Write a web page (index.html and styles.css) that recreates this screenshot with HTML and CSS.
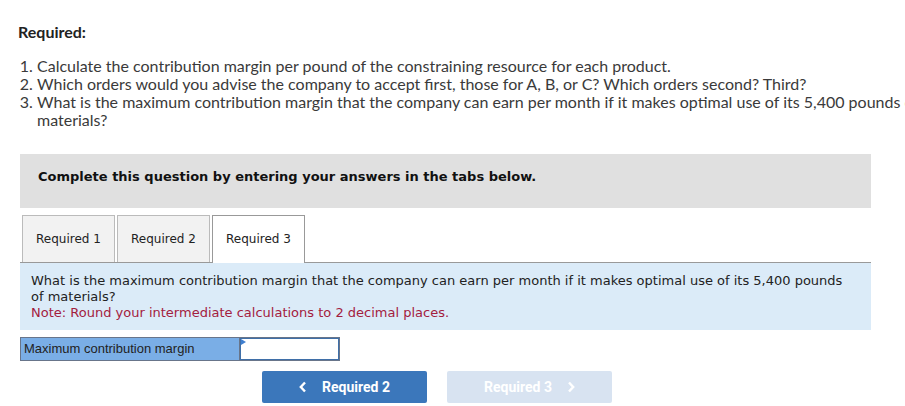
FILE: index.html
```html
<!DOCTYPE html>
<html lang="en">
<head>
    <meta charset="UTF-8">
    <meta name="viewport" content="width=device-width, initial-scale=1.0">
    <title>Required</title>
    <link rel="stylesheet" href="styles.css">
</head>
<body>
    <div class="page">
        <h2 class="required-title">Required:</h2>
        <ol class="required-list">
            <li>Calculate the contribution margin per pound of the constraining resource for each product.</li>
            <li>Which orders would you advise the company to accept first, those for A, B, or C? Which orders second? Third?</li>
            <li>What is the maximum contribution margin that the company can earn per month if it makes optimal use of its 5,400 pounds of materials?</li>
        </ol>

        <div class="instructions">
            Complete this question by entering your answers in the tabs below.
        </div>

        <div class="tabs">
            <button class="tab">Required 1</button>
            <button class="tab">Required 2</button>
            <button class="tab active">Required 3</button>
        </div>

        <div class="question">
            What is the maximum contribution margin that the company can earn per month if it makes optimal use of its 5,400 pounds of materials?
            <div class="note">Note: Round your intermediate calculations to 2 decimal places.</div>
        </div>

        <div class="answer-row">
            <div class="answer-label">Maximum contribution margin</div>
            <div class="answer-cell">
                <span class="flag"></span>
                <input type="text" class="answer-input">
            </div>
        </div>

        <div class="nav">
            <button class="nav-button prev">
                <svg class="chev" width="8" height="12" viewBox="0 0 8 12"><polyline points="6,1.5 1.8,6 6,10.5" fill="none" stroke="#fff" stroke-width="2.4"/></svg>
                Required 2
            </button>
            <button class="nav-button next disabled">
                Required 3
                <svg class="chev" width="8" height="12" viewBox="0 0 8 12"><polyline points="2,1.5 6.2,6 2,10.5" fill="none" stroke="#fff" stroke-width="2.4"/></svg>
            </button>
        </div>
    </div>
</body>
</html>
```

FILE: styles.css
```css
html, body {
    margin: 0;
    padding: 0;
    overflow: hidden;
    background: #fff;
}
.page {
    width: 851px;
    padding: 20px 0 0 20px;
    color: #333;
}
.required-title {
    font-family: Lato, "Liberation Sans", sans-serif;
    font-size: 16px;
    font-weight: bold;
    color: #222;
    margin: 2px 0 0 -2px;
}
.required-list {
    font-family: Lato, "Liberation Sans", sans-serif;
    font-size: 16px;
    line-height: 18px;
    color: #3a3a3a;
    width: 930px;
    margin: 16px 0 0 0;
    padding-left: 17px;
}
.instructions {
    margin-top: 25px;
    background: #e0e0e0;
    height: 54px;
    box-sizing: border-box;
    padding: 15px 18px 0;
    font-family: "DejaVu Sans", Verdana, sans-serif;
    font-size: 13px;
    font-weight: bold;
    color: #111;
}
.tabs {
    display: flex;
    gap: 2px;
    margin-top: 7px;
    padding-left: 2px;
    border-bottom: 1px solid #999;
}
.tab {
    width: 93px;
    height: 47px;
    background: #f2f2f2;
    border: 1px solid #bbb;
    border-bottom: none;
    font-family: "DejaVu Sans", Verdana, sans-serif;
    font-size: 12px;
    color: #222;
    padding: 0;
}
.tab.active {
    background: #fff;
    border-color: #999;
    margin-bottom: -1px;
    height: 48px;
    padding-bottom: 1px;
}
.question {
    background: #dbebf8;
    height: 67px;
    box-sizing: border-box;
    padding: 10px 20px 0 11px;
    font-family: "DejaVu Sans", Verdana, sans-serif;
    font-size: 13px;
    line-height: 16px;
    color: #222;
}
.note {
    color: #a3203e;
}
.answer-row {
    display: flex;
    margin-top: 7px;
    width: 320px;
    height: 24px;
    border: 1px solid #68758a;
    box-sizing: border-box;
}
.answer-label {
    width: 219px;
    background: #7aaee6;
    border-right: 1px solid #68758a;
    font-family: "Liberation Sans", Arial, sans-serif;
    font-size: 13px;
    line-height: 22px;
    padding-left: 3px;
    color: #222;
    box-sizing: border-box;
}
.answer-cell {
    position: relative;
    flex: 1;
    background: #fff;
    border: 1px solid #3f6fa8;
}
.answer-input {
    width: 100%;
    height: 100%;
    border: none;
    padding: 0;
    box-sizing: border-box;
    outline: none;
}
.flag {
    position: absolute;
    top: 0;
    left: 0;
    width: 0;
    height: 0;
    border-top: 3px solid transparent;
    border-bottom: 3px solid transparent;
    border-left: 5px solid #3f7fd0;
}
.nav {
    display: flex;
    gap: 20px;
    margin-top: 10px;
    padding-left: 242px;
}
.nav-button {
    display: flex;
    align-items: center;
    justify-content: center;
    gap: 15px;
    width: 165px;
    height: 32px;
    border: none;
    border-radius: 2px;
    background: #3b77bb;
    color: #fff;
    font-family: Roboto, "Liberation Sans", sans-serif;
    font-size: 14px;
    font-weight: bold;
    padding: 0;
}
.nav-button.disabled {
    background: #d8e3f1;
}
.chev {
    display: block;
}
```
